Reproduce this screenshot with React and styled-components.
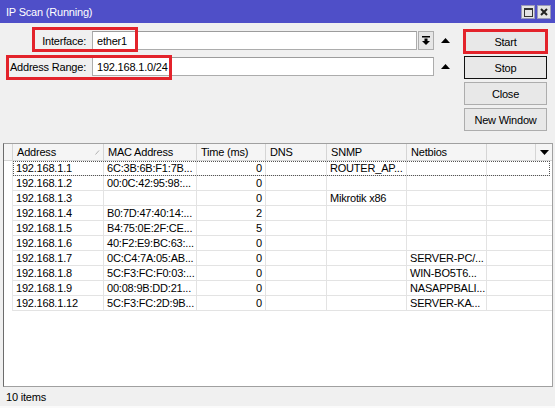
import React from 'react';
import styled, { createGlobalStyle } from 'styled-components';

const GlobalStyle = createGlobalStyle`
  html, body {
    margin: 0;
    padding: 0;
    background: #f0f0f0;
  }
  body {
    font-family: "Liberation Sans", Arial, sans-serif;
    font-size: 11px;
    letter-spacing: -0.2px;
    color: #000;
  }
`;

const Window = styled.div`
  width: 555px;
  height: 408px;
  display: flex;
  flex-direction: column;
  background: #f0f0f0;
  overflow: hidden;
`;

const TitleBar = styled.div`
  height: 23px;
  flex: none;
  box-sizing: border-box;
  background: #4f4fc8;
  color: #fff;
  display: flex;
  align-items: center;
  padding: 1px 4px 0 6px;
  .title {
    flex: 1;
  }
`;

const TitleButtons = styled.div`
  display: flex;
  gap: 2px;
`;

const TitleButton = styled.div`
  width: 14px;
  height: 14px;
  box-sizing: border-box;
  background: #e4e4e4;
  border: 1px solid #9a9ab8;
  display: flex;
  align-items: center;
  justify-content: center;
`;

const Top = styled.div`
  display: flex;
  gap: 8px;
  padding: 7px 8px 0 0;
`;

const Form = styled.div`
  flex: 1;
  display: flex;
  flex-direction: column;
  gap: 7px;
  padding-top: 1px;
`;

const Row = styled.div`
  position: relative;
  display: flex;
  align-items: center;
  height: 19px;
`;

const Label = styled.div`
  width: 86px;
  margin-right: 6px;
  flex: none;
  text-align: right;
`;

const Input = styled.div`
  flex: 1;
  height: 19px;
  box-sizing: border-box;
  background: #fff;
  border: 1px solid #acacac;
  border-top-color: #9c9c9c;
  padding-left: 4px;
  display: flex;
  align-items: center;
`;

const DropButton = styled.div`
  width: 16px;
  height: 19px;
  margin-left: 1px;
  box-sizing: border-box;
  border: 1px solid #adadad;
  background: #e6e6e6;
  display: flex;
  align-items: center;
  justify-content: center;
`;

const ArrowCell = styled.div`
  width: 22px;
  flex: none;
  display: flex;
  justify-content: center;
  align-items: center;
`;

const Mark = styled.div`
  position: absolute;
  left: ${p => p.$left}px;
  top: ${p => p.$top}px;
  width: ${p => p.$width}px;
  height: 25px;
  box-sizing: border-box;
  border: 3px solid #e3232b;
  pointer-events: none;
`;

const ButtonCol = styled.div`
  width: 83px;
  flex: none;
  display: flex;
  flex-direction: column;
  gap: 3px;
`;

const Button = styled.div`
  height: 23px;
  box-sizing: border-box;
  background: #e8e8e8;
  border: 1px solid ${p => (p.$default ? '#111' : '#adadad')};
  display: flex;
  align-items: center;
  justify-content: center;
  ${p => p.$marked && `
    border: 2px solid #e3232b;
    outline: 1px solid #e3232b;
  `}
`;

const Table = styled.div`
  flex: 1;
  margin: 12px 2px 0 3px;
  background: #fff;
  border: 1px solid #a0a0a0;
  border-left-color: #6c6c6c;
  display: flex;
  flex-direction: column;
`;

const cols = '91px 93px 69px 61px 80px 80px';

const Header = styled.div`
  display: grid;
  grid-template-columns: 9px ${cols} 49px 16px;
  height: 16px;
  background: #f5f5f5;
  border-bottom: 1px solid #d5d5d5;
`;

const HeadCell = styled.div`
  box-sizing: border-box;
  border-right: 1px solid #d5d5d5;
  padding: 0 3px 0 4px;
  display: flex;
  align-items: center;
  justify-content: ${p => (p.$center ? 'center' : 'space-between')};
  &:last-child {
    border-right: none;
  }
`;

const TableRow = styled.div`
  display: grid;
  grid-template-columns: 9px 1fr;
  height: 15px;
`;

const Gutter = styled.div`
  border-right: 1px solid #e6e6e6;
`;

const RowCells = styled.div`
  display: grid;
  grid-template-columns: ${cols} 1fr;
  outline: ${p => (p.$focused ? '1px dotted #555' : 'none')};
  outline-offset: -1px;
  margin-right: ${p => (p.$focused ? '2px' : '0')};
`;

const Cell = styled.div`
  box-sizing: border-box;
  border-right: 1px solid #e3e3e3;
  border-bottom: 1px solid #e3e3e3;
  padding: 0 3px;
  display: flex;
  align-items: center;
  justify-content: ${p => (p.$right ? 'flex-end' : 'flex-start')};
  white-space: nowrap;
  overflow: hidden;
  &:last-child {
    border-right: none;
  }
`;

const StatusBar = styled.div`
  height: 21px;
  flex: none;
  display: flex;
  align-items: center;
  padding-left: 6px;
  border-bottom: 2px solid #fafafa;
  box-sizing: border-box;
`;

const UpArrow = () => (
  <svg width="9" height="5" viewBox="0 0 9 5">
    <polygon points="0,5 9,5 4.5,0" fill="#000" />
  </svg>
);

const rows = [
  ['192.168.1.1', '6C:3B:6B:F1:7B...', '0', '', 'ROUTER_AP...', ''],
  ['192.168.1.2', '00:0C:42:95:98:...', '0', '', '', ''],
  ['192.168.1.3', '', '0', '', 'Mikrotik x86', ''],
  ['192.168.1.4', 'B0:7D:47:40:14:...', '2', '', '', ''],
  ['192.168.1.5', 'B4:75:0E:2F:CE...', '5', '', '', ''],
  ['192.168.1.6', '40:F2:E9:BC:63:...', '0', '', '', ''],
  ['192.168.1.7', '0C:C4:7A:05:AB...', '0', '', '', 'SERVER-PC/...'],
  ['192.168.1.8', '5C:F3:FC:F0:03:...', '0', '', '', 'WIN-BO5T6...'],
  ['192.168.1.9', '00:08:9B:DD:21...', '0', '', '', 'NASAPPBALI...'],
  ['192.168.1.12', '5C:F3:FC:2D:9B...', '0', '', '', 'SERVER-KA...'],
];

export default function App() {
  return (
    <Window>
      <GlobalStyle />
      <TitleBar>
        <span className="title">IP Scan (Running)</span>
        <TitleButtons>
          <TitleButton>
            <svg width="9" height="9" viewBox="0 0 9 9">
              <rect x="0.5" y="0.5" width="8" height="8" fill="none" stroke="#333" />
              <rect x="0" y="0" width="9" height="2" fill="#333" />
            </svg>
          </TitleButton>
          <TitleButton>
            <svg width="8" height="8" viewBox="0 0 8 8">
              <path d="M1 1 L7 7 M7 1 L1 7" stroke="#222" strokeWidth="2" />
            </svg>
          </TitleButton>
        </TitleButtons>
      </TitleBar>

      <Top>
        <Form>
          <Row>
            <Label>Interface:</Label>
            <Input>ether1</Input>
            <DropButton>
              <svg width="8" height="9" viewBox="0 0 8 9">
                <rect x="0" y="0" width="8" height="1.5" fill="#000" />
                <rect x="2.5" y="2.5" width="3" height="2.5" fill="#000" />
                <polygon points="0,5 8,5 4,9" fill="#000" />
              </svg>
            </DropButton>
            <ArrowCell><UpArrow /></ArrowCell>
            <Mark $left={32} $top={-4} $width={106} />
          </Row>
          <Row>
            <Label>Address Range:</Label>
            <Input>192.168.1.0/24</Input>
            <ArrowCell><UpArrow /></ArrowCell>
            <Mark $left={6} $top={-2} $width={166} />
          </Row>
        </Form>
        <ButtonCol>
          <Button $marked>Start</Button>
          <Button $default>Stop</Button>
          <Button>Close</Button>
          <Button>New Window</Button>
        </ButtonCol>
      </Top>

      <Table>
        <Header>
          <HeadCell />
          <HeadCell>
            Address
            <svg width="5" height="5" viewBox="0 0 5 5">
              <path d="M0.5 4.5 L4 0.5" stroke="#b0b0b0" strokeWidth="1" />
            </svg>
          </HeadCell>
          <HeadCell>MAC Address</HeadCell>
          <HeadCell>Time (ms)</HeadCell>
          <HeadCell>DNS</HeadCell>
          <HeadCell>SNMP</HeadCell>
          <HeadCell>Netbios</HeadCell>
          <HeadCell />
          <HeadCell $center>
            <svg width="9" height="5" viewBox="0 0 9 5">
              <polygon points="0,0 9,0 4.5,5" fill="#000" />
            </svg>
          </HeadCell>
        </Header>
        {rows.map((r, i) => (
          <TableRow key={r[0]}>
            <Gutter />
            <RowCells $focused={i === 0}>
              <Cell>{r[0]}</Cell>
              <Cell>{r[1]}</Cell>
              <Cell $right>{r[2]}</Cell>
              <Cell>{r[3]}</Cell>
              <Cell>{r[4]}</Cell>
              <Cell>{r[5]}</Cell>
              <Cell />
            </RowCells>
          </TableRow>
        ))}
      </Table>

      <StatusBar>10 items</StatusBar>
    </Window>
  );
}
